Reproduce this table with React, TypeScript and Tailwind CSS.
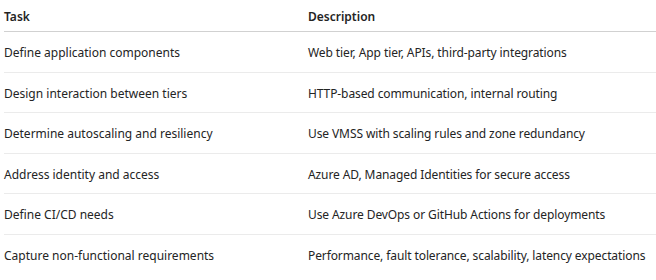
const rows = [
  ["Define application components", "Web tier, App tier, APIs, third-party integrations"],
  ["Design interaction between tiers", "HTTP-based communication, internal routing"],
  ["Determine autoscaling and resiliency", "Use VMSS with scaling rules and zone redundancy"],
  ["Address identity and access", "Azure AD, Managed Identities for secure access"],
  ["Define CI/CD needs", "Use Azure DevOps or GitHub Actions for deployments"],
  ["Capture non-functional requirements", "Performance, fault tolerance, scalability, latency expectations"],
]

export default function App() {
  return (
    <div className="w-[656px] h-[280px] bg-white pl-1 text-[12px] text-[#242424] font-['Noto_Sans',sans-serif]">
      <div className="grid grid-cols-[304px_1fr] h-8 pt-[2px] items-center border-b border-[#d1d1d1] font-semibold">
        <div>Task</div>
        <div>Description</div>
      </div>
      {rows.map(([task, desc], i) => (
        <div
          key={task}
          className={`grid grid-cols-[304px_1fr] h-[40.5px] pt-[3px] items-center ${i < rows.length - 1 ? "border-b border-[#ebebeb]" : ""}`}
        >
          <div>{task}</div>
          <div className="whitespace-nowrap tracking-[-0.1px]">{desc}</div>
        </div>
      ))}
    </div>
  )
}
